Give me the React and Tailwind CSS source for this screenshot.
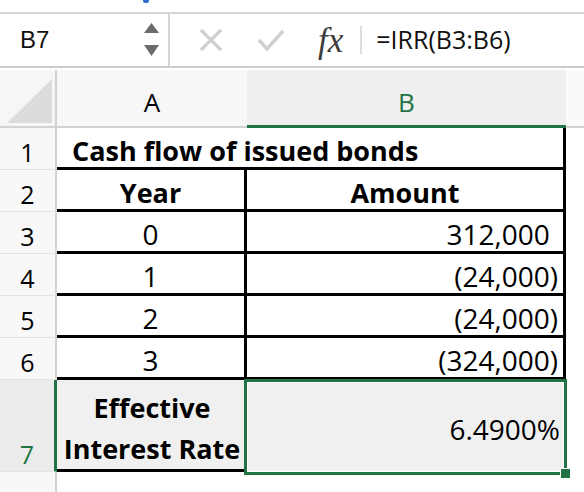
const GREEN = 'text-[#217346]'

const rows = [
  { n: '3', year: '0', amount: '312,000', pad: true },
  { n: '4', year: '1', amount: '(24,000)' },
  { n: '5', year: '2', amount: '(24,000)' },
  { n: '6', year: '3', amount: '(324,000)' },
]

function RowHead({ n, className = '' }) {
  return (
    <div
      className={`flex items-end justify-center pb-[5px] bg-[#f8f8f8] border-r-2 border-r-[#d2d2d2] border-b border-b-[#e4e4e4] text-[25px] leading-[24px] text-black ${className}`}
    >
      {n}
    </div>
  )
}

export default function App() {
  return (
    <div
      className="w-[584px] h-[492px] bg-white overflow-hidden flex flex-col text-black"
      style={{ fontFamily: '"Open Sans", "Noto Sans", sans-serif' }}
    >
      {/* top strip */}
      <div className="relative h-[14px] shrink-0 border-b-2 border-[#d4d4d4]">
        <div className="absolute left-[143px] top-[-2px] w-[6px] h-[5px] rounded-full bg-[#2f6bd0]" />
      </div>

      {/* formula bar */}
      <div className="h-[54px] shrink-0 flex border-b-2 border-[#cbcbcb]">
        <div className="w-[170px] flex items-center justify-between pl-[20px] pr-[9px] border-r-2 border-[#d6d6d6]">
          <span
            className="text-[24px] text-[#111]"
            style={{ fontFamily: '"Liberation Sans", Arial, sans-serif' }}
          >
            B7
          </span>
          <svg width="15" height="34" viewBox="0 0 15 34">
            <path d="M7.5 0 L15 10 L0 10 Z" fill="#6b6b6b" />
            <path d="M0 22 L15 22 L7.5 33 Z" fill="#6b6b6b" />
          </svg>
        </div>
        <div className="flex items-center">
          <svg width="24" height="24" viewBox="0 0 24 24" className="ml-[29px]">
            <path d="M2 2 L22 22 M22 2 L2 22" stroke="#d0d0d0" strokeWidth="3.2" />
          </svg>
          <svg width="28" height="22" viewBox="0 0 28 22" className="ml-[34px]">
            <path d="M2 11 L10 20 L26 2" stroke="#d0d0d0" strokeWidth="3.4" fill="none" />
          </svg>
          <span
            className="ml-[33px] italic text-[35px] text-[#3c3c3c] leading-none"
            style={{ fontFamily: '"Liberation Serif", "DejaVu Serif", serif' }}
          >
            fx
          </span>
          <div className="ml-[17px] w-[2px] h-[28px] bg-[#dcdcdc]" />
          <span className="ml-[14px] text-[25px] text-[#111]">=IRR(B3:B6)</span>
        </div>
      </div>

      <div className="h-[2px] shrink-0" />

      {/* column headers */}
      <div className="h-[58px] shrink-0 grid grid-cols-[57px_190px_319px_1fr]">
        <div className="bg-[#f6f6f6] border-r-2 border-r-[#d2d2d2] border-b-2 border-b-[#d2d2d2] flex items-end justify-end pb-[3px] pr-[3px]">
          <svg width="45" height="44" viewBox="0 0 45 44">
            <path d="M45 0 L45 44 L0 44 Z" fill="#dcdcdc" />
          </svg>
        </div>
        <div className="bg-[#f7f7f7] border-b-2 border-b-[#d2d2d2] flex justify-center pt-[20px] text-[26px] leading-[24px]">
          A
        </div>
        <div className={`bg-[#efefef] border-b-[3px] border-b-[#217346] flex justify-center pt-[20px] text-[26px] leading-[24px] ${GREEN}`}>
          B
        </div>
        <div className="bg-[#fafafa] border-b-2 border-b-[#d2d2d2]" />
      </div>

      {/* row 1 */}
      <div className="h-[42px] shrink-0 grid grid-cols-[57px_190px_319px_1fr]">
        <RowHead n="1" />
        <div className="col-span-2 flex items-end pl-[15px] pb-[3px] border-b-[3px] border-r-[3px] border-black text-[27px] leading-[27px] font-bold">
          Cash flow of issued bonds
        </div>
        <div />
      </div>

      {/* row 2 */}
      <div className="h-[42px] shrink-0 grid grid-cols-[57px_190px_319px_1fr]">
        <RowHead n="2" />
        <div className="flex items-end justify-center pb-[3px] border-b-[3px] border-r-[3px] border-black text-[27px] leading-[27px] font-bold">
          Year
        </div>
        <div className="flex items-end justify-center pb-[3px] border-b-[3px] border-r-[3px] border-black text-[27px] leading-[27px] font-bold">
          Amount
        </div>
        <div />
      </div>

      {rows.map((r) => (
        <div key={r.n} className="h-[42px] shrink-0 grid grid-cols-[57px_190px_319px_1fr]">
          <RowHead n={r.n} />
          <div className="flex items-end justify-center pb-[3px] border-b-[3px] border-r-[3px] border-black text-[28px] leading-[27px]">
            {r.year}
          </div>
          <div className="flex items-end justify-end pr-[5px] pb-[3px] border-b-[3px] border-r-[3px] border-black text-[28px] leading-[27px]">
            {r.amount}
            {r.pad && <span className="invisible">)</span>}
          </div>
          <div />
        </div>
      ))}

      {/* row 7 */}
      <div className="h-[92px] shrink-0 grid grid-cols-[57px_190px_319px_1fr]">
        <div className={`flex items-end justify-center pb-[5px] bg-[#ececec] border-r-[3px] border-r-[#217346] border-b border-b-[#e4e4e4] text-[25px] leading-[24px] ${GREEN}`}>
          7
        </div>
        <div className="flex flex-col items-center justify-center pt-[6px] bg-[#f0f0f0] border-b-[3px] border-black text-[27px] leading-[41px] font-bold">
          <span>Effective</span>
          <span>Interest Rate</span>
        </div>
        <div className="relative flex items-center justify-end pr-[6px] pt-[6px] bg-[#f0f0f0] text-[28px] leading-[40px]">
          6.4900%
          <div className="absolute -left-[3px] -top-[1px] right-[-1px] bottom-[-3px] border-[3px] border-[#217346]">
            <div className="absolute inset-0 border border-white" />
          </div>
          <div className="absolute right-[-5px] bottom-[-7px] w-[11px] h-[11px] bg-[#217346] border border-white" />
        </div>
        <div />
      </div>

      {/* row 8 */}
      <div className="flex-1 grid grid-cols-[57px_1fr]">
        <div className="bg-[#f8f8f8] border-r-2 border-r-[#d2d2d2]" />
        <div />
      </div>
    </div>
  )
}
